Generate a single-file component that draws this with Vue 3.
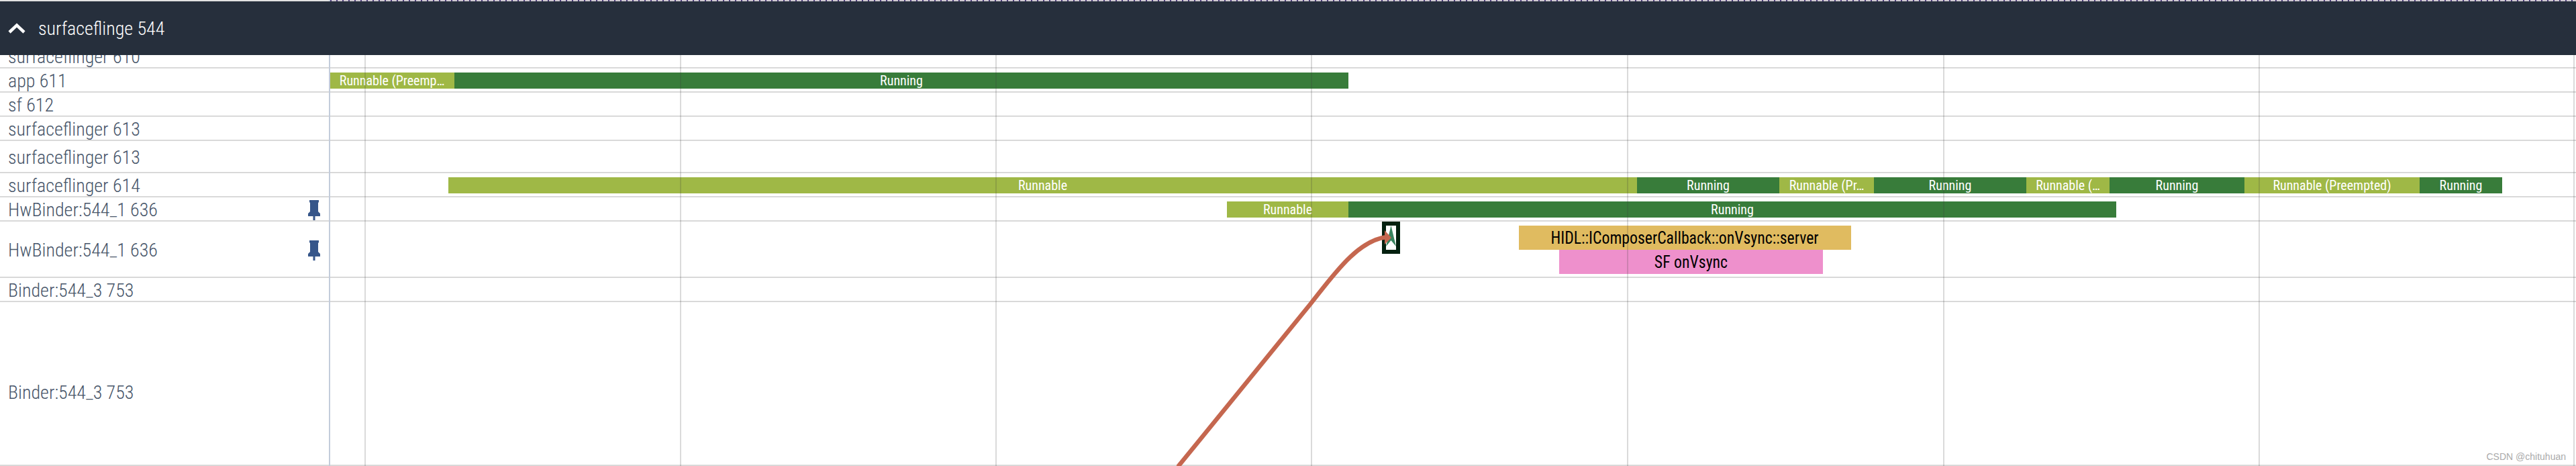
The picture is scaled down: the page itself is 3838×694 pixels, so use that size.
<script setup>
const gridLines = [543, 1013, 1483, 1953, 2424, 2895, 3365, 3834]

const rows = [
  { name: 'surfaceflinger 610', height: 36, bars: [] },
  {
    name: 'app 611', height: 36,
    bars: [
      { kind: 'runnable', from: 491, to: 677, label: 'Runnable (Preemp…' },
      { kind: 'running', from: 677, to: 2009, label: 'Running' },
    ],
  },
  { name: 'sf 612', height: 36, bars: [] },
  { name: 'surfaceflinger 613', height: 36, bars: [] },
  { name: 'surfaceflinger 613', height: 48, bars: [] },
  {
    name: 'surfaceflinger 614', height: 36,
    bars: [
      { kind: 'runnable', from: 668, to: 2439, label: 'Runnable' },
      { kind: 'running', from: 2439, to: 2651, label: 'Running' },
      { kind: 'runnable', from: 2651, to: 2792, label: 'Runnable (Pr…' },
      { kind: 'running', from: 2792, to: 3019, label: 'Running' },
      { kind: 'runnable', from: 3019, to: 3143, label: 'Runnable (…' },
      { kind: 'running', from: 3143, to: 3344, label: 'Running' },
      { kind: 'runnable', from: 3344, to: 3605, label: 'Runnable (Preempted)' },
      { kind: 'running', from: 3605, to: 3728, label: 'Running' },
    ],
  },
  {
    name: 'HwBinder:544_1 636', height: 36, pinned: true,
    bars: [
      { kind: 'runnable', from: 1828, to: 2009, label: 'Runnable' },
      { kind: 'running', from: 2009, to: 3153, label: 'Running' },
    ],
  },
  {
    name: 'HwBinder:544_1 636', height: 84, pinned: true,
    bars: [
      { kind: 'slice gold', from: 2263, to: 2758, label: 'HIDL::IComposerCallback::onVsync::server', top: 6 },
      { kind: 'slice pink', from: 2323, to: 2716, label: 'SF onVsync', top: 42 },
    ],
  },
  { name: 'Binder:544_3 753', height: 36, bars: [] },
  { name: 'Binder:544_3 753', height: 244, tall: true, bars: [] },
]

const barStyle = (bar) => ({
  left: `${bar.from - 490}px`,
  width: `${bar.to - bar.from}px`,
  top: bar.top === undefined ? null : `${bar.top}px`,
})
const rowStyle = (row) => ({ height: `${row.height}px` })
const gridStyle = (x) => ({ left: `${x}px` })
</script>

<template>
  <div class="page">
    <div class="top-strip">
      <i class="strip-left" />
      <i class="strip-rule" />
      <i class="strip-dash" />
    </div>
    <header class="group-head">
      <svg class="chevron" viewBox="0 0 26 16" width="26" height="16">
        <path d="M2 14 L13 3.5 L24 14" fill="none" stroke="#fff" stroke-width="4.5" />
      </svg>
      <span class="group-title">surfaceflinge 544</span>
    </header>

    <main class="tracks">
      <div v-for="(row, i) in rows" :key="i" class="row" :style="rowStyle(row)">
        <div class="label" :class="{ tall: row.tall }">
          <span class="name">{{ row.name }}</span>
          <svg v-if="row.pinned" class="pin" viewBox="0 0 18 30" width="18" height="30">
            <path d="M2 0 H16 V3 L15 4 V17 L18 20 V24 H10.5 V30 H7.5 V24 H0 V20 L3 17 V4 L2 3 Z" fill="#36568a" />
          </svg>
        </div>
        <div class="lane">
          <div v-for="(bar, j) in row.bars" :key="j" class="bar" :class="bar.kind" :style="barStyle(bar)">
            <span>{{ bar.label }}</span>
          </div>
        </div>
      </div>
    </main>

    <div class="overlay">
      <i class="rule" />
      <i v-for="x in gridLines" :key="x" class="grid" :style="gridStyle(x)" />
      <svg class="flow" width="3838" height="694" viewBox="0 0 3838 694">
        <rect x="2062" y="333" width="21" height="42" fill="#fff" stroke="#03200f" stroke-width="6" />
        <path d="M2072.5 336 L2080 367 L2072.5 358 L2065 367 Z" fill="#38845f" />
        <path d="M1755 695 L1953 452 C1985 412 2022 358 2066 353" fill="none" stroke="#c5674f" stroke-width="6.5" />
        <path d="M2063 343 L2073 354 L2063 364 Z" fill="#c5674f" />
      </svg>
      <span class="mark">CSDN @chituhuan</span>
    </div>
  </div>
</template>

<style>
html, body { margin: 0; background: #fff; }
</style>

<style scoped>
.page {
  position: relative;
  width: 3838px;
  height: 694px;
  overflow: hidden;
  background: #fff;
  font-family: Roboto, "Liberation Sans", sans-serif;
  font-stretch: 75%;
}
.top-strip {
  display: flex;
  height: 2px;
}
.strip-left {
  width: 490px;
  background: #e2e2e2;
}
.strip-rule {
  width: 2px;
  background: #c3ccdb;
}
.strip-dash {
  flex: 1;
  background: repeating-linear-gradient(90deg, #4b3d78 0 2px, #cfc8d2 2px 9px);
}
.group-head {
  position: relative;
  z-index: 3;
  box-sizing: border-box;
  height: 80px;
  display: flex;
  align-items: center;
  gap: 19px;
  padding-left: 12px;
  background: #262f3c;
  color: #fff;
}
.group-title {
  font-size: 28px;
  font-weight: 300;
}
.tracks {
  margin-top: -16px;
}
.row {
  box-sizing: border-box;
  display: flex;
  border-bottom: 2px solid #d9d9d9;
}
.label {
  width: 490px;
  flex: none;
  display: flex;
  align-items: center;
  justify-content: space-between;
  box-sizing: border-box;
  padding: 2px 13px 0 12px;
  color: #475569;
  font-size: 28px;
  font-weight: 300;
}
.label.tall {
  padding-top: 26px;
}
.pin {
  margin-top: 2px;
}
.lane {
  position: relative;
  flex: 1;
}
.bar {
  position: absolute;
  top: 6px;
  height: 24px;
  overflow: hidden;
  display: flex;
  align-items: center;
  justify-content: center;
  font-size: 20px;
  color: #fff;
  white-space: nowrap;
}
.running { background: #387c3a; }
.runnable { background: #9fb846; }
.slice {
  height: 36px;
  color: #000;
  font-size: 25px;
}
.slice span {
  display: inline-block;
  transform: scaleX(0.95);
}
.gold { background: #e0bb60; }
.pink { background: #ee90cc; }
.overlay {
  position: absolute;
  inset: 0;
  z-index: 2;
  pointer-events: none;
}
.rule, .grid {
  position: absolute;
  top: 82px;
  bottom: 0;
  width: 2px;
}
.rule { left: 490px; background: #c3ccdb; }
.grid { background: rgba(60, 60, 60, 0.19); }
.flow { position: absolute; left: 0; top: 0; }
.mark {
  position: absolute;
  right: 15px;
  bottom: 6px;
  font-family: "Liberation Sans", sans-serif;
  font-stretch: normal;
  font-size: 14px;
  color: #aaa;
}
</style>
